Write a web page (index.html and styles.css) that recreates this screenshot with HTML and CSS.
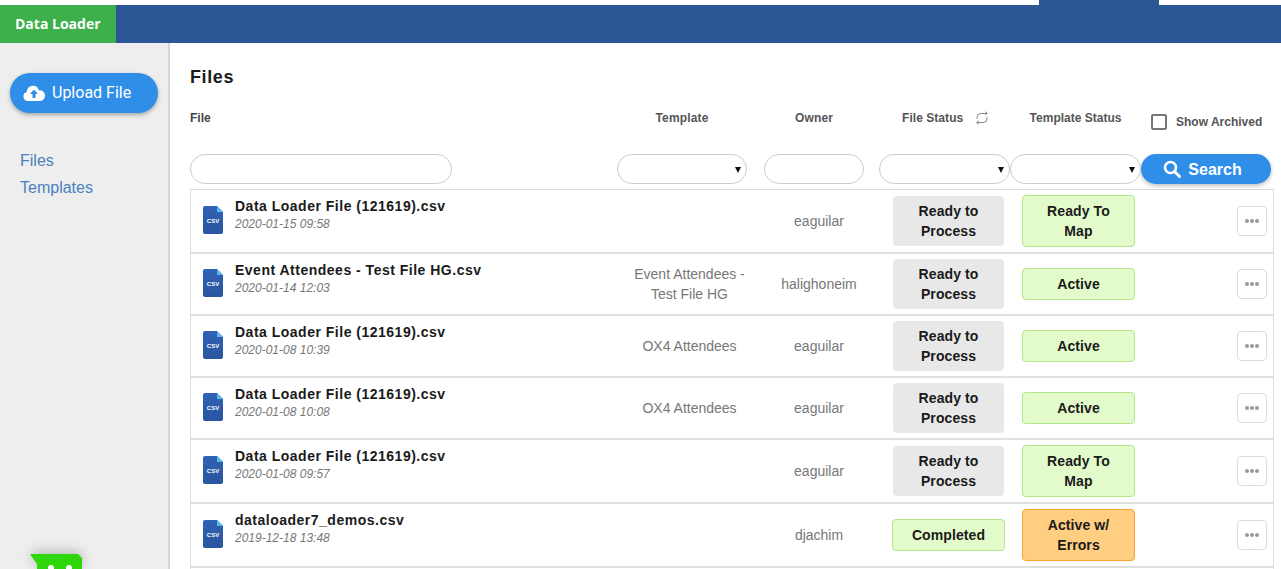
FILE: index.html
```html
<!DOCTYPE html>
<html lang="en">
<head>
<meta charset="utf-8">
<title>Data Loader</title>
<link rel="stylesheet" href="styles.css">
</head>
<body>
<div class="topstrip"><span class="toptab"></span></div>
<header class="appbar"><div class="brand">Data Loader</div></header>
<div class="shell">
  <aside class="sidebar">
    <button class="upload" type="button">
      <svg class="cloud" width="22" height="16" viewBox="0 0 22 16"><path fill="#fff" d="M5 16a4.600 4.600 0 0 1-1.300-9A6 6 0 0 1 9.500.8a6 6 0 0 1 6.300 4.400A5.400 5.400 0 0 1 17.300 16z"/><path fill="#2f8ee8" d="M11 4.500l4 4.500h-2.500v4h-3v-4H7z"/></svg>
      Upload File
    </button>
    <nav class="sidenav">
      <a href="#">Files</a>
      <a href="#">Templates</a>
    </nav>
  </aside>
  <main class="content">
    <h1 class="title">Files</h1>
    <div class="filters labels">
      <div class="lbl lbl-left">File</div>
      <div class="lbl">Template</div>
      <div class="lbl">Owner</div>
      <div class="lbl lbl-status">File Status
        <svg class="refresh" width="14" height="14" viewBox="0 0 14 14" fill="none" stroke="#777" stroke-width="0.9"><path d="M2 8V6.500A4 4 0 0 1 6 2.500h6"/><path d="M10.300 0.800L12.300 2.500L10.300 4.200"/><path d="M12 6v1.500a4 4 0 0 1-4 4H2"/><path d="M3.700 9.800L1.700 11.500L3.700 13.200"/></svg>
      </div>
      <div class="lbl">Template Status</div>
      <label class="archived"><span class="check"></span>Show Archived</label>
    </div>
    <div class="filters inputs">
      <div><input class="pill pill-file" type="text"></div>
      <div class="pill pill-select pill-tpl"></div>
      <div><input class="pill pill-owner" type="text"></div>
      <div class="pill pill-select"></div>
      <div class="pill pill-select"></div>
      <button class="search" type="button">
        <svg width="18" height="18" viewBox="0 0 18 18" fill="none" stroke="#fff"><circle cx="7.500" cy="7.500" r="5.500" stroke-width="2.600"/><path d="M11.500 11.500L16.500 16.500" stroke-width="3" stroke-linecap="round"/></svg>
        <span class="search-text">Search</span>
      </button>
    </div>
    <div class="rows">
      <div class="row">
        <div class="cell-file">
          <svg class="csv" width="20" height="28" viewBox="0 0 20 28"><defs><linearGradient id="g" x1="0" y1="0" x2="0" y2="1"><stop offset="0" stop-color="#2f62b5"/><stop offset="1" stop-color="#2a55a0"/></linearGradient></defs><path fill="url(#g)" d="M2 0h12l6 6v20a2 2 0 0 1-2 2H2a2 2 0 0 1-2-2V2a2 2 0 0 1 2-2z"/><path fill="#5db8ee" d="M14 0l6 6h-6z"/><text x="10" y="17" class="csv-text">CSV</text></svg>
          <div class="file-meta"><div class="fname">Data Loader File (121619).csv</div><div class="fdate">2020-01-15 09:58</div></div>
        </div>
        <div class="cell-mid"></div>
        <div class="cell-mid">eaguilar</div>
        <div class="cell-badge"><span class="badge grey">Ready to Process</span></div>
        <div class="cell-badge"><span class="badge green">Ready To Map</span></div>
        <div class="cell-act"><button class="more" type="button"><i></i><i></i><i></i></button></div>
      </div>
      <div class="row">
        <div class="cell-file">
          <svg class="csv" width="20" height="28" viewBox="0 0 20 28"><path fill="url(#g)" d="M2 0h12l6 6v20a2 2 0 0 1-2 2H2a2 2 0 0 1-2-2V2a2 2 0 0 1 2-2z"/><path fill="#5db8ee" d="M14 0l6 6h-6z"/><text x="10" y="17" class="csv-text">CSV</text></svg>
          <div class="file-meta"><div class="fname">Event Attendees - Test File HG.csv</div><div class="fdate">2020-01-14 12:03</div></div>
        </div>
        <div class="cell-mid tpl">Event Attendees - Test File HG</div>
        <div class="cell-mid">halighoneim</div>
        <div class="cell-badge"><span class="badge grey">Ready to Process</span></div>
        <div class="cell-badge"><span class="badge green">Active</span></div>
        <div class="cell-act"><button class="more" type="button"><i></i><i></i><i></i></button></div>
      </div>
      <div class="row">
        <div class="cell-file">
          <svg class="csv" width="20" height="28" viewBox="0 0 20 28"><path fill="url(#g)" d="M2 0h12l6 6v20a2 2 0 0 1-2 2H2a2 2 0 0 1-2-2V2a2 2 0 0 1 2-2z"/><path fill="#5db8ee" d="M14 0l6 6h-6z"/><text x="10" y="17" class="csv-text">CSV</text></svg>
          <div class="file-meta"><div class="fname">Data Loader File (121619).csv</div><div class="fdate">2020-01-08 10:39</div></div>
        </div>
        <div class="cell-mid tpl">OX4 Attendees</div>
        <div class="cell-mid">eaguilar</div>
        <div class="cell-badge"><span class="badge grey">Ready to Process</span></div>
        <div class="cell-badge"><span class="badge green">Active</span></div>
        <div class="cell-act"><button class="more" type="button"><i></i><i></i><i></i></button></div>
      </div>
      <div class="row">
        <div class="cell-file">
          <svg class="csv" width="20" height="28" viewBox="0 0 20 28"><path fill="url(#g)" d="M2 0h12l6 6v20a2 2 0 0 1-2 2H2a2 2 0 0 1-2-2V2a2 2 0 0 1 2-2z"/><path fill="#5db8ee" d="M14 0l6 6h-6z"/><text x="10" y="17" class="csv-text">CSV</text></svg>
          <div class="file-meta"><div class="fname">Data Loader File (121619).csv</div><div class="fdate">2020-01-08 10:08</div></div>
        </div>
        <div class="cell-mid tpl">OX4 Attendees</div>
        <div class="cell-mid">eaguilar</div>
        <div class="cell-badge"><span class="badge grey">Ready to Process</span></div>
        <div class="cell-badge"><span class="badge green">Active</span></div>
        <div class="cell-act"><button class="more" type="button"><i></i><i></i><i></i></button></div>
      </div>
      <div class="row">
        <div class="cell-file">
          <svg class="csv" width="20" height="28" viewBox="0 0 20 28"><path fill="url(#g)" d="M2 0h12l6 6v20a2 2 0 0 1-2 2H2a2 2 0 0 1-2-2V2a2 2 0 0 1 2-2z"/><path fill="#5db8ee" d="M14 0l6 6h-6z"/><text x="10" y="17" class="csv-text">CSV</text></svg>
          <div class="file-meta"><div class="fname">Data Loader File (121619).csv</div><div class="fdate">2020-01-08 09:57</div></div>
        </div>
        <div class="cell-mid"></div>
        <div class="cell-mid">eaguilar</div>
        <div class="cell-badge"><span class="badge grey">Ready to Process</span></div>
        <div class="cell-badge"><span class="badge green">Ready To Map</span></div>
        <div class="cell-act"><button class="more" type="button"><i></i><i></i><i></i></button></div>
      </div>
      <div class="row">
        <div class="cell-file">
          <svg class="csv" width="20" height="28" viewBox="0 0 20 28"><path fill="url(#g)" d="M2 0h12l6 6v20a2 2 0 0 1-2 2H2a2 2 0 0 1-2-2V2a2 2 0 0 1 2-2z"/><path fill="#5db8ee" d="M14 0l6 6h-6z"/><text x="10" y="17" class="csv-text">CSV</text></svg>
          <div class="file-meta"><div class="fname">dataloader7_demos.csv</div><div class="fdate">2019-12-18 13:48</div></div>
        </div>
        <div class="cell-mid"></div>
        <div class="cell-mid">djachim</div>
        <div class="cell-badge"><span class="badge green">Completed</span></div>
        <div class="cell-badge"><span class="badge orange">Active w/ Errors</span></div>
        <div class="cell-act"><button class="more" type="button"><i></i><i></i><i></i></button></div>
      </div>
      <div class="rows-tail"></div>
    </div>
  </main>
</div>
<div class="chat-wrap"><div class="chat"><span class="dot"></span><span class="dot"></span></div></div>
</body>
</html>
```
FILE: styles.css
```css
* { box-sizing: border-box; }
html, body { height: 100%; }
html { overflow: hidden; }
body {
  margin: 0;
  height: 569px;
  overflow: hidden;
  background: #fff;
  font-family: "Liberation Sans", Arial, sans-serif;
  color: #1a1a1a;
  position: relative;
}
.topstrip { height: 5px; display: flex; padding-left: 1039px; }
.toptab { width: 120px; background: #2d5696; }
.appbar { height: 38px; background: #2d5696; display: flex; }
.brand {
  width: 116px;
  background: #3db04b;
  color: #fff;
  font: 700 14px/38px "Open Sans", sans-serif;
  padding-left: 15px;
}
.shell { display: flex; height: 526px; overflow: hidden; }
.sidebar {
  width: 170px;
  flex: none;
  background: #eee;
  border-right: 2px solid #d5d5d5;
  padding: 30px 0 0 10px;
}
.upload {
  width: 148px;
  height: 40px;
  border: 0;
  border-radius: 20px;
  background: #2f8ee8;
  color: #fff;
  font: 400 16px/38px Roboto, sans-serif;
  display: flex;
  align-items: center;
  gap: 7px;
  padding: 0 0 0 13px;
  box-shadow: 0 2px 4px rgba(0,0,0,.3);
}
.sidenav { display: flex; flex-direction: column; gap: 9px; margin: 39px 0 0 10px; }
.sidenav a { color: #4a80bd; font-size: 16px; line-height: 18px; text-decoration: none; }
.content { flex: 1; padding: 23px 0 0 20px; min-width: 0; }
.title { margin: 0; font-size: 18px; line-height: 22px; font-weight: 700; letter-spacing: .6px; color: #1c1c1c; }
.filters {
  display: grid;
  grid-template-columns: 427px 147px 115px 131px 131px 130px;
}
.labels { margin-top: 23px; height: 27px; align-items: start; }
.lbl {
  font-size: 12px;
  line-height: 14px;
  font-weight: 700;
  color: #555;
  letter-spacing: .15px;
  width: 130px;
  text-align: center;
}
.lbl-left { text-align: left; color: #444; letter-spacing: 0; }
.lbl-status { width: 106px; display: flex; gap: 12px; align-items: center; margin-left: 23px; white-space: nowrap; letter-spacing: .05px; }
.filters .lbl:nth-child(3) { width: 100px; }
.filters .lbl:nth-child(5) { letter-spacing: 0; padding-left: 1px; }
.archived {
  display: flex;
  align-items: center;
  font-size: 12px;
  font-weight: 700;
  color: #555;
  white-space: nowrap;
  gap: 9px;
  margin: 3px 0 0 10px;
}
.check { width: 16px; height: 16px; border: 2px solid #767676; border-radius: 2px; background: #fff; flex: none; }
.inputs { margin-top: 16px; height: 30px; }
.pill {
  display: block;
  height: 30px;
  border: 1px solid #ccc;
  border-radius: 15px;
  background: #fff;
  position: relative;
}
.pill-file { width: 262px; }
.pill-owner { width: 100px; }
.pill-tpl { width: 130px; }
.pill-select::after {
  content: "";
  position: absolute;
  right: 5px;
  top: 12px;
  border: 3.5px solid transparent;
  border-top: 6px solid #111;
  border-bottom: 0;
}
.search {
  width: 130px;
  height: 30px;
  border: 0;
  border-radius: 15px;
  background: #2f8ee8;
  color: #fff;
  font: 700 16px/22px "Liberation Sans", sans-serif;
  display: flex;
  align-items: center;
  justify-content: center;
  gap: 7px;
  padding: 0 7px 0 0;
  box-shadow: 0 2px 4px rgba(0,0,0,.25);
}
.search-text { position: relative; top: 1px; }
.rows {
  margin-top: 5px;
  width: 1084px;
  border-top: 1px solid #ddd;
  border-left: 1px solid #ddd;
  border-right: 1px solid #ddd;
}
.row {
  display: grid;
  grid-template-columns: 429px 139px 120px 139px 121px 1fr;
  align-items: center;
  padding: 5px 0;
  border-bottom: 2px solid #e0e0e0;
}
.rows-tail { height: 2px; }
.cell-file { display: flex; align-items: center; align-self: stretch; gap: 12px; padding-left: 12px; }
.file-meta { align-self: flex-start; padding-top: 3px; }
.csv { flex: none; margin-bottom: 2px; }
.csv-text { fill: #fff; font: 700 6px "Liberation Sans", sans-serif; text-anchor: middle; }
.fname { font-size: 14px; line-height: 17px; font-weight: 700; letter-spacing: .5px; color: #1a1a1a; white-space: nowrap; }
.fdate { font-size: 12px; line-height: 18px; font-style: italic; color: #777; }
.cell-mid { text-align: center; font-size: 14px; line-height: 20px; color: #777; }
.tpl { padding: 0 12px; }
.cell-badge { display: flex; justify-content: center; }
.badge {
  width: 111px;
  min-height: 32px;
  padding: 5px 16px;
  border-radius: 4px;
  text-align: center;
  font-size: 14px;
  line-height: 20px;
  font-weight: 700;
  letter-spacing: .1px;
  color: #1a1a1a;
}
.grey { background: #e8e8e8; }
.green { width: 113px; background: #e3fbcb; border: 1px solid #b4e68a; }
.orange { width: 113px; background: #ffce80; border: 1px solid #f7a52c; }
.cell-act { display: flex; justify-content: flex-end; padding-right: 6px; }
.more {
  width: 30px;
  height: 30px;
  padding: 0;
  background: #fff;
  border: 1px solid #ddd;
  border-radius: 4px;
  display: flex;
  align-items: center;
  justify-content: center;
  gap: 1px;
}
.more i { width: 4px; height: 4px; border-radius: 50%; background: #999; }
.chat-wrap {
  position: absolute;
  left: 30px;
  bottom: 0;
  height: 15px;
  filter: drop-shadow(0 -2px 6px rgba(0,0,0,.25));
}
.chat {
  width: 52px;
  height: 15px;
  overflow: hidden;
  background: #2ed60c;
  clip-path: polygon(0 0, 48px 0, 52px 4px, 52px 15px, 7px 15px, 7px 10px);
  display: flex;
  justify-content: center;
  gap: 12px;
  padding: 11px 0 0 7px;
}
.dot { width: 6px; height: 6px; border-radius: 50%; background: #fff; flex: none; }
```
